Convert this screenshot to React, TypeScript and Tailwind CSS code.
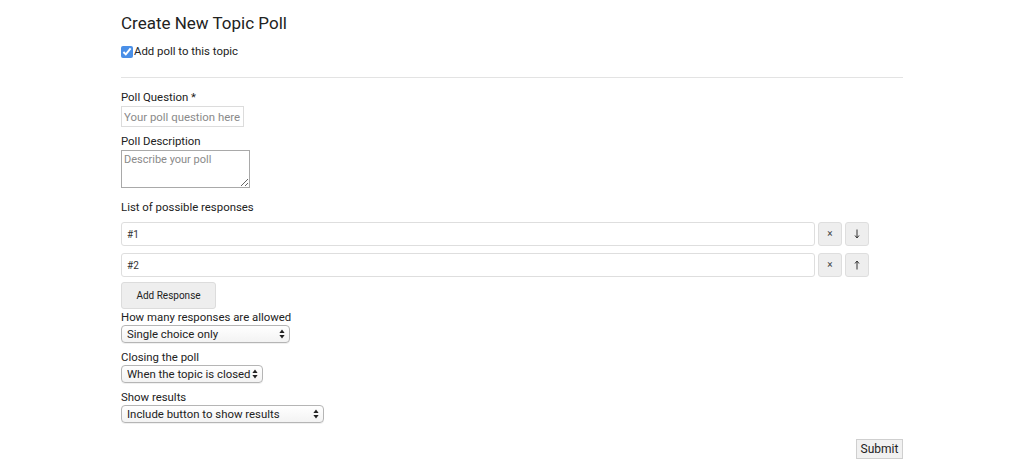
import React from "react";

const font = { fontFamily: "Roboto, 'Noto Sans', Arial, sans-serif" };

function Arrows() {
  return (
    <svg width="6" height="10" viewBox="0 0 6 10" className="pointer-events-none absolute right-[5px] top-1/2 -translate-y-1/2">
      <path d="M3 0.5 L5.6 4 L0.4 4 Z" fill="#222" />
      <path d="M3 9.5 L5.6 6 L0.4 6 Z" fill="#222" />
    </svg>
  );
}

function FakeSelect({ value, w }: { value: string; w: string }) {
  return (
    <div className={`relative ${w} h-[18px]`}>
      <select
        defaultValue={value}
        className="block h-[18px] w-full appearance-none rounded-[4px] border border-[#b5b5b5] bg-gradient-to-b from-white to-[#f3f3f3] pl-[5px] pr-[8px] text-[11.4px] leading-[16px] text-[#222] shadow-[0_1px_0_rgba(0,0,0,0.06)] outline-none"
        style={font}
      >
        <option>{value}</option>
      </select>
      <Arrows />
    </div>
  );
}

function Arrow({ up }: { up?: boolean }) {
  return (
    <svg width="6" height="10" viewBox="0 0 6 10" className={up ? "rotate-180" : ""}>
      <path d="M3 0.5 V8.5" stroke="#333" strokeWidth="1" fill="none" />
      <path d="M1 6.5 L3 9 L5 6.5" stroke="#333" strokeWidth="1" fill="none" />
    </svg>
  );
}

export default function App() {
  return (
    <div className="min-h-[470px] w-full bg-white" style={font}>
      <div className="mx-auto flex w-[782px] flex-col pt-[12px] text-[#222]">
        <h1 className="text-[17px] leading-[22px] font-normal text-[#222]">Create New Topic Poll</h1>
        <label className="mt-[10px] flex h-[15px] items-center text-[11.4px] leading-[15px]">
          <input type="checkbox" defaultChecked className="m-0 h-[12px] w-[12px] accent-[#4a8fe7]" />
          <span className="ml-[1px]">Add poll to this topic</span>
        </label>
        <div className="mt-[18px] h-px w-full bg-[#e3e3e3]" />
        <div className="mt-[12px] text-[11.4px] leading-[15px]">Poll Question *</div>
        <input
          type="text"
          placeholder="Your poll question here"
          className="mt-[1px] block h-[21px] w-[123px] border border-[#dcdcdc] px-[2px] text-[11.4px] text-[#222] outline-none placeholder:text-[#8a8a8a]"
          style={font}
        />
        <div className="mt-[7px] text-[11.4px] leading-[15px]">Poll Description</div>
        <textarea
          placeholder="Describe your poll"
          className="mt-[1px] block h-[38px] w-[129px] border border-[#a9a9a9] px-[2px] py-[1px] text-[11px] leading-[15px] text-[#222] outline-none placeholder:text-[#8a8a8a]"
          style={font}
        />
        <div className="mt-[12px] text-[11.4px] leading-[15px]">List of possible responses</div>
        <div className="mt-[7px] flex flex-col gap-[7px] pr-[34px]">
          {[
            { v: "#1", up: false },
            { v: "#2", up: true },
          ].map((r) => (
            <div key={r.v} className="flex items-center gap-[3px]">
              <input
                type="text"
                defaultValue={r.v}
                className="block h-[24px] flex-1 rounded-[3px] border border-[#dedede] px-[5px] text-[10px] text-[#333] outline-none"
                style={font}
              />
              <button className="flex h-[24px] w-[24px] items-center justify-center rounded-[3px] border border-[#dedede] bg-[#eeeeee] text-[10px] leading-none text-[#444]">
                ×
              </button>
              <button className="flex h-[24px] w-[24px] items-center justify-center rounded-[3px] border border-[#dedede] bg-[#eeeeee]">
                <Arrow up={r.up} />
              </button>
            </div>
          ))}
        </div>
        <button
          className="mt-[5px] h-[27px] w-[95px] rounded-[3px] border border-[#dcdcdc] bg-[#eeeeee] text-[10px] text-[#222]"
          style={font}
        >
          Add Response
        </button>
        <div className="mt-[1px] text-[11.4px] leading-[15px]">How many responses are allowed</div>
        <FakeSelect value="Single choice only" w="w-[169px]" />
        <div className="mt-[7px] text-[11.4px] leading-[15px]">Closing the poll</div>
        <FakeSelect value="When the topic is closed" w="w-[142px]" />
        <div className="mt-[7px] text-[11.4px] leading-[15px]">Show results</div>
        <FakeSelect value="Include button to show results" w="w-[203px]" />
        <div className="mt-[16px] flex justify-end">
          <button
            className="h-[20px] w-[47px] border border-[#cfcfcf] bg-[#f1f1f1] text-[12px] leading-[18px] text-[#222]"
            style={font}
          >
            Submit
          </button>
        </div>
      </div>
    </div>
  );
}
